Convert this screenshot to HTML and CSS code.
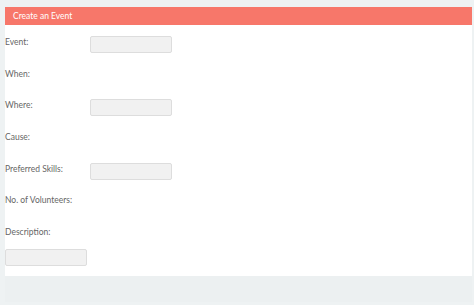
FILE: index.html
```html
<!DOCTYPE html>
<html>
<head>
<meta charset="utf-8">
<link rel="stylesheet" href="styles.css">
</head>
<body>
<div class="panel">
  <div class="panel-header">Create an Event</div>
  <form class="panel-body">
    <div class="row"><label class="label">Event:</label><input class="field" type="text"></div>
    <div class="row"><label class="label">When:</label></div>
    <div class="row"><label class="label">Where:</label><input class="field" type="text"></div>
    <div class="row"><label class="label">Cause:</label></div>
    <div class="row"><label class="label">Preferred Skills:</label><input class="field" type="text"></div>
    <div class="row"><label class="label">No. of Volunteers:</label></div>
    <div class="desc">
      <label class="label">Description:</label>
      <input class="field" type="text">
    </div>
  </form>
  <div class="panel-footer"></div>
</div>
</body>
</html>
```
FILE: styles.css
```css
html, body {
  margin: 0;
  padding: 0;
  background: #eef2f3;
  font-family: Lato, "Liberation Sans", sans-serif;
}
.panel {
  margin: 7px 2px 0 5px;
  background: #ffffff;
}
.panel-header {
  height: 18px;
  line-height: 18px;
  background: #f7776a;
  color: #ffffff;
  font-size: 8.5px;
  padding-left: 8px;
}
.panel-body {
  margin: 0;
  padding: 11px 0 10px 0;
}
.row {
  display: flex;
  align-items: flex-start;
  height: 17px;
  margin-bottom: 14.67px;
}
.label {
  display: block;
  width: 85px;
  font-size: 8.5px;
  line-height: 13px;
  color: #666666;
}
.field {
  box-sizing: border-box;
  width: 82px;
  height: 17px;
  margin: 0;
  padding: 0;
  border: 1px solid #dddddd;
  border-radius: 2px;
  background: #f1f1f1;
}
.desc {
  display: flex;
  flex-direction: column;
  gap: 10px;
}
.panel-footer {
  height: 26px;
  background: #ecf0f1;
}
```
